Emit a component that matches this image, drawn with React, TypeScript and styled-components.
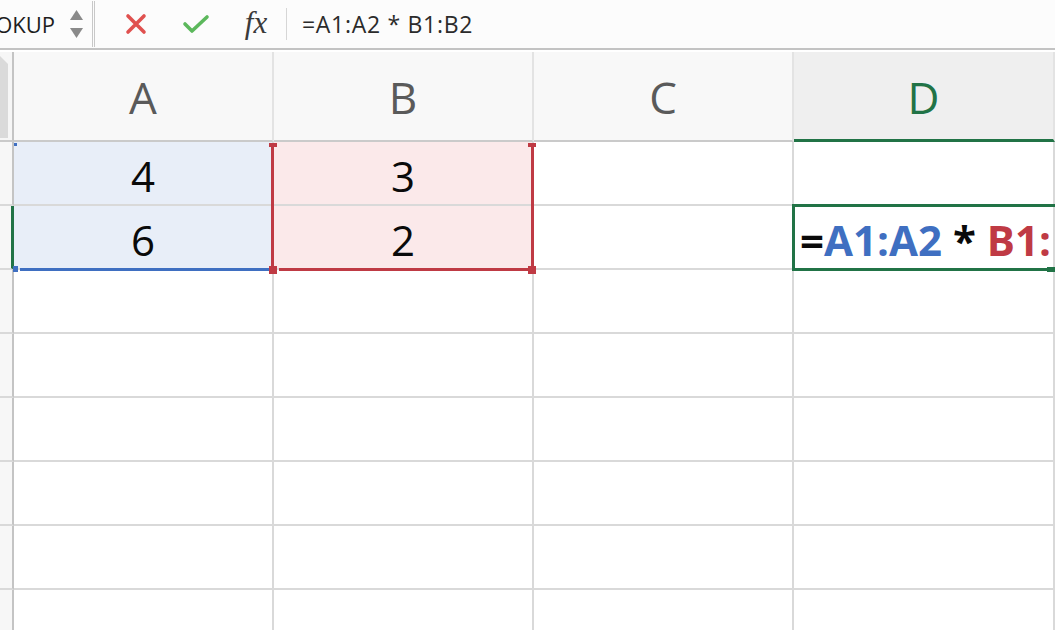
import { Fragment } from 'react';
import styled, { createGlobalStyle } from 'styled-components';

const GRID = '#d9d9d9';
const GREEN = '#217346';
const BLUE = '#3f6fc1';
const RED = '#bf3a44';

const GlobalStyle = createGlobalStyle`
  html, body {
    margin: 0;
    padding: 0;
    background: #ffffff;
    overflow: hidden;
  }
  body {
    font-family: 'Open Sans', 'Liberation Sans', sans-serif;
  }
`;

const Window = styled.div`
  width: 1055px;
  height: 630px;
  overflow: hidden;
  background: #ffffff;
`;

const FormulaBar = styled.div`
  height: 48px;
  display: flex;
  align-items: center;
  background: #fcfcfc;
  border-bottom: 2px solid #c3c3c3;
  margin-bottom: 2px;
`;

const NameBox = styled.div`
  width: 95px;
  height: 46px;
  flex: none;
  display: flex;
  align-items: center;
  justify-content: flex-end;
  gap: 14px;
  padding-right: 8px;
  box-sizing: border-box;
  overflow: hidden;
  border-right: 3px double #c8c8c8;
  & > * {
    flex: none;
  }
`;

const NameText = styled.span`
  font-size: 22px;
  color: #1e1e1e;
  white-space: nowrap;
`;

const IconGroup = styled.div`
  display: flex;
  align-items: center;
  padding-left: 11px;
`;

const IconSlot = styled.div`
  width: 60px;
  flex: none;
  display: flex;
  align-items: center;
  justify-content: center;
`;

const FxLabel = styled.span`
  font-family: 'Liberation Serif', 'DejaVu Serif', serif;
  font-style: italic;
  font-size: 31px;
  color: #3a3a3a;
  line-height: 1;
  margin-top: -4px;
`;

const Divider = styled.div`
  width: 1px;
  height: 32px;
  background: #d6d6d6;
  flex: none;
`;

const FormulaText = styled.div`
  padding-left: 15px;
  font-size: 23px;
  color: #2b2b2b;
  white-space: nowrap;
  letter-spacing: 0.7px;
`;

const Sheet = styled.div`
  display: grid;
  grid-template-columns: 14px 260px 260px 260px 1fr;
  grid-template-rows: 90px repeat(8, 64px);
`;

const Placed = styled.div<{ $row: number; $col: number }>`
  grid-row: ${(p) => p.$row};
  grid-column: ${(p) => p.$col};
`;

const Corner = styled(Placed)`
  background: #f6f6f6;
  border-right: 2px solid #c4c4c4;
  border-bottom: 2px solid #cacaca;
  box-sizing: border-box;
  padding: 4px 4px 2px 0;
  display: flex;
`;

const CornerMark = styled.div`
  flex: 1;
  background: #dadada;
  position: relative;
  &::after {
    content: '';
    position: absolute;
    top: 0;
    right: 0;
    border-top: 8px solid #f6f6f6;
    border-left: 8px solid transparent;
  }
`;

const ColHeader = styled(Placed)<{ $active?: boolean }>`
  display: flex;
  align-items: center;
  justify-content: center;
  box-sizing: border-box;
  background: ${(p) => (p.$active ? '#efefef' : '#f8f8f8')};
  border-right: 2px solid #e3e3e3;
  border-bottom: ${(p) => (p.$active ? `3px solid ${GREEN}` : '2px solid #cacaca')};
  font-size: 44px;
  color: ${(p) => (p.$active ? GREEN : '#5a5a5a')};
  padding-top: ${(p) => (p.$active ? '3px' : '2px')};
`;

const RowHeader = styled(Placed)<{ $active?: boolean }>`
  background: #f7f7f7;
  box-sizing: border-box;
  border-right: ${(p) => (p.$active ? `3px solid ${GREEN}` : '2px solid #c4c4c4')};
  border-bottom: 2px solid ${GRID};
`;

const Cell = styled(Placed)<{ $fill?: string }>`
  box-sizing: border-box;
  background: ${(p) => p.$fill || '#ffffff'};
  border-right: 2px solid ${GRID};
  border-bottom: 2px solid ${GRID};
  display: flex;
  align-items: center;
  justify-content: center;
  padding-top: 4px;
  font-size: 42px;
  color: #0a0a0a;
  white-space: nowrap;
`;

const FormulaCell = styled(Cell)`
  justify-content: flex-start;
  padding-left: 6px;
  font-weight: 700;
  overflow: hidden;
`;

const Ref = styled.span<{ $color: string }>`
  color: ${(p) => p.$color};
`;

const Range = styled.div<{ $col: number; $rows: string }>`
  grid-column: ${(p) => p.$col};
  grid-row: ${(p) => p.$rows};
  position: relative;
  pointer-events: none;
  z-index: 2;
`;

const Edge = styled.div<{ $color: string }>`
  position: absolute;
  background: ${(p) => p.$color};
`;

const ActiveFrame = styled.div`
  position: absolute;
  top: -2px;
  left: -2px;
  right: -6px;
  bottom: -1px;
  border: 3px solid ${GREEN};
`;

function Spinner() {
  return (
    <svg width="15" height="34" viewBox="0 0 15 34">
      <polygon points="7.5,3 14,13 1,13" fill="#8a8a8a" />
      <polygon points="1,21 14,21 7.5,31" fill="#8a8a8a" />
    </svg>
  );
}

function CancelIcon() {
  return (
    <svg width="22" height="22" viewBox="0 0 22 22">
      <path d="M3 3 L19 19 M19 3 L3 19" stroke="#e0514f" strokeWidth="3.6" strokeLinecap="round" />
    </svg>
  );
}

function EnterIcon() {
  return (
    <svg width="28" height="22" viewBox="0 0 28 22">
      <polyline
        points="3,11 10,18 25,4"
        fill="none"
        stroke="#5cb85c"
        strokeWidth="3.6"
        strokeLinecap="round"
        strokeLinejoin="round"
      />
    </svg>
  );
}

const COLUMNS = ['A', 'B', 'C', 'D'];
const EMPTY_ROWS = [4, 5, 6, 7, 8, 9];
const A_FILL = '#e8eef8';
const B_FILL = '#fbe9ea';

export default function App() {
  return (
    <>
      <GlobalStyle />
      <Window>
        <FormulaBar>
          <NameBox>
            <NameText>VLOOKUP</NameText>
            <Spinner />
          </NameBox>
          <IconGroup>
            <IconSlot>
              <CancelIcon />
            </IconSlot>
            <IconSlot>
              <EnterIcon />
            </IconSlot>
            <IconSlot>
              <FxLabel>fx</FxLabel>
            </IconSlot>
          </IconGroup>
          <Divider />
          <FormulaText>=A1:A2 * B1:B2</FormulaText>
        </FormulaBar>

        <Sheet>
          <Corner $row={1} $col={1}>
            <CornerMark />
          </Corner>
          {COLUMNS.map((c, i) => (
            <ColHeader key={c} $row={1} $col={i + 2} $active={c === 'D'}>
              {c}
            </ColHeader>
          ))}

          <RowHeader $row={2} $col={1} />
          <Cell $row={2} $col={2} $fill={A_FILL}>4</Cell>
          <Cell $row={2} $col={3} $fill={B_FILL}>3</Cell>
          <Cell $row={2} $col={4} />
          <Cell $row={2} $col={5} />

          <RowHeader $row={3} $col={1} $active />
          <Cell $row={3} $col={2} $fill={A_FILL}>6</Cell>
          <Cell $row={3} $col={3} $fill={B_FILL}>2</Cell>
          <Cell $row={3} $col={4} />
          <FormulaCell $row={3} $col={5}>
            =<Ref $color={BLUE}>A1:A2</Ref>&nbsp;*&nbsp;<Ref $color={RED}>B1:B2</Ref>
          </FormulaCell>

          {EMPTY_ROWS.map((r) => (
            <Fragment key={r}>
              <RowHeader $row={r} $col={1} />
              {[2, 3, 4, 5].map((c) => (
                <Cell key={c} $row={r} $col={c} />
              ))}
            </Fragment>
          ))}

          {/* A1:A2 reference highlight */}
          <Range $col={2} $rows="2 / 4">
            <Edge $color={BLUE} style={{ left: 6, right: 3, bottom: -1, height: 3 }} />
            <Edge $color={BLUE} style={{ left: 0, top: 1, width: 3, height: 3 }} />
            <Edge $color={BLUE} style={{ left: -1, bottom: -2, width: 5, height: 6 }} />
          </Range>

          {/* B1:B2 reference highlight */}
          <Range $col={3} $rows="2 / 4">
            <Edge $color={RED} style={{ left: -3, top: 4, bottom: 4, width: 3 }} />
            <Edge $color={RED} style={{ right: 0, top: 4, bottom: 4, width: 3 }} />
            <Edge $color={RED} style={{ left: 5, right: 5, bottom: -1, height: 3 }} />
            <Edge $color={RED} style={{ left: -5, top: 1, width: 8, height: 4 }} />
            <Edge $color={RED} style={{ right: -2, top: 1, width: 8, height: 4 }} />
            <Edge $color={RED} style={{ left: -5, bottom: -4, width: 8, height: 8 }} />
            <Edge $color={RED} style={{ right: -2, bottom: -4, width: 8, height: 8 }} />
          </Range>

          {/* active cell D2 */}
          <Range $col={5} $rows="3 / 4">
            <ActiveFrame />
            <Edge $color={GREEN} style={{ right: 0, bottom: -2, width: 8, height: 5 }} />
          </Range>
        </Sheet>
      </Window>
    </>
  );
}
